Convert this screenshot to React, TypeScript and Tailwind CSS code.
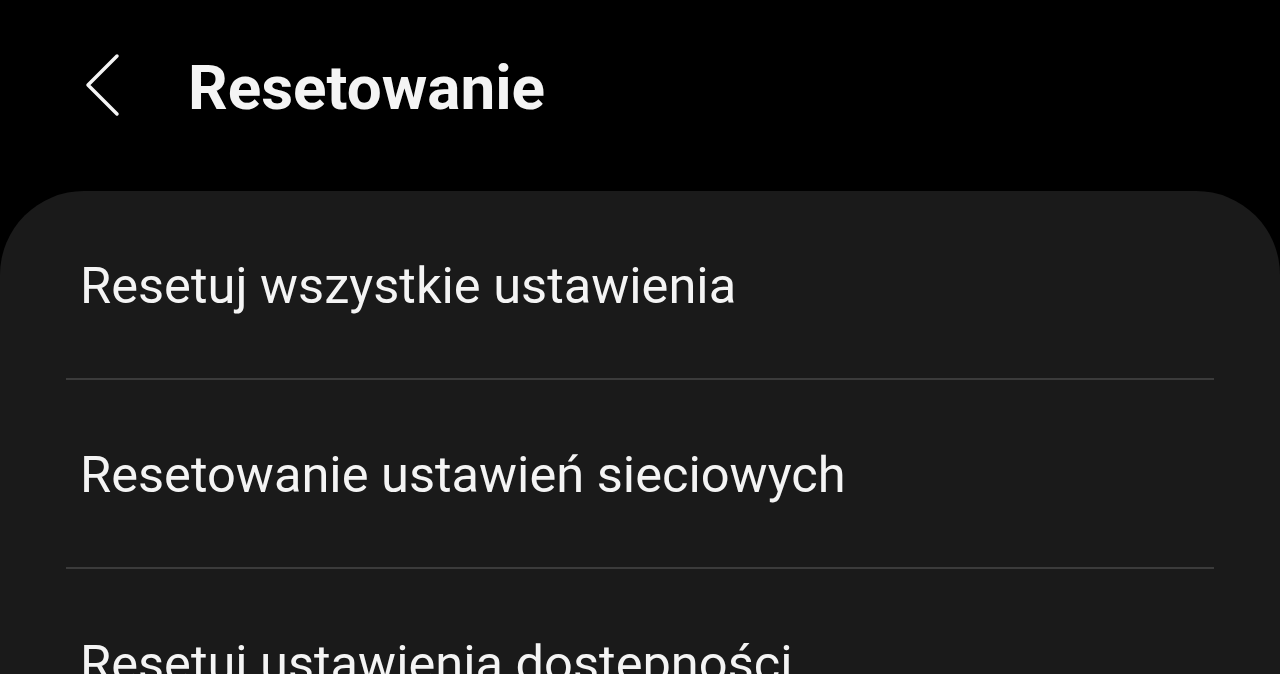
const items = [
  'Resetuj wszystkie ustawienia',
  'Resetowanie ustawień sieciowych',
  'Resetuj ustawienia dostępności',
]

export default function App() {
  return (
    <main
      className="w-[1280px] h-[674px] overflow-hidden bg-black text-[#f4f4f4]"
      style={{ fontFamily: 'Roboto, "Noto Sans", sans-serif' }}
    >
      <header className="h-[191px] flex items-start pt-[52px]">
        <button className="ml-[84px] mt-[1px] w-[38px] h-[64px] flex items-center justify-center">
          <svg width="38" height="64" viewBox="0 0 38 64" fill="none">
            <path d="M33 3 L4 32 L33 61" stroke="#f4f4f4" strokeWidth="3.5" strokeLinecap="round" strokeLinejoin="round" />
          </svg>
        </button>
        <h1 className="ml-[66px] text-[62px] leading-[72px] font-bold">Resetowanie</h1>
      </header>

      <section className="bg-[#1a1a1a] rounded-t-[84px]">
        {items.map((label, i) => (
          <div key={label}>
            <div className="h-[187px] flex items-center pl-[80px] pt-[4px]">
              <span className="text-[50.6px] leading-none">{label}</span>
            </div>
            {i < items.length - 1 && <div className="mx-[66px] h-[2px] bg-[#3b3b3b]" />}
          </div>
        ))}
      </section>
    </main>
  )
}
